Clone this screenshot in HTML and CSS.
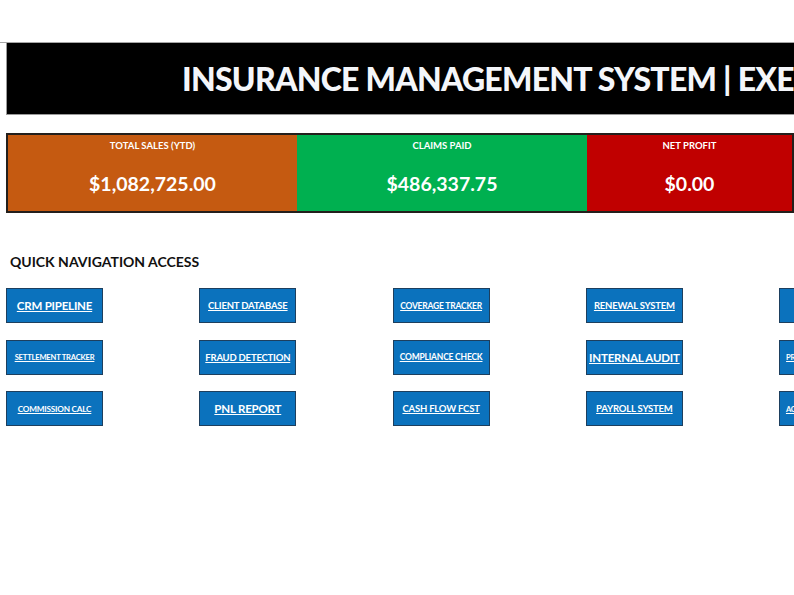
FILE: index.html
```html
<!DOCTYPE html>
<html>
<head>
<meta charset="utf-8">
<link rel="stylesheet" href="styles.css">
</head>
<body>
<div class="page">
  <div class="topline"></div>
  <div class="header">
    <h1 class="title">INSURANCE MANAGEMENT SYSTEM | EXECUTIVE DASHBOARD</h1>
  </div>
  <div class="kpis">
    <div class="kpi kpi-sales">
      <div class="kpi-label">TOTAL SALES (YTD)</div>
      <div class="kpi-value">$1,082,725.00</div>
    </div>
    <div class="kpi kpi-claims">
      <div class="kpi-label">CLAIMS PAID</div>
      <div class="kpi-value">$486,337.75</div>
    </div>
    <div class="kpi kpi-profit">
      <div class="kpi-label">NET PROFIT</div>
      <div class="kpi-value">$0.00</div>
    </div>
  </div>
  <h2 class="section">QUICK NAVIGATION ACCESS</h2>
  <div class="nav">
    <a class="btn fs12">CRM PIPELINE</a>
    <a class="btn fs10">CLIENT DATABASE</a>
    <a class="btn fs9">COVERAGE TRACKER</a>
    <a class="btn fs10">RENEWAL SYSTEM</a>
    <a class="btn fs10">POLICY ADMIN</a>
    <a class="btn fs8">SETTLEMENT TRACKER</a>
    <a class="btn fs10">FRAUD DETECTION</a>
    <a class="btn fs9">COMPLIANCE CHECK</a>
    <a class="btn fs12">INTERNAL AUDIT</a>
    <a class="btn fs8">PREMIUM CALCULATOR</a>
    <a class="btn fs8b">COMMISSION CALC</a>
    <a class="btn fs12">PNL REPORT</a>
    <a class="btn fs10">CASH FLOW FCST</a>
    <a class="btn fs10">PAYROLL SYSTEM</a>
    <a class="btn fs8">ACCOUNTS RECEIVABLE</a>
  </div>
</div>
</body>
</html>
```
FILE: styles.css
```css
html, body {
  margin: 0;
  padding: 0;
  background: #ffffff;
  overflow: hidden;
  width: 794px;
  height: 595px;
}
body {
  font-family: "Lato", "Open Sans", "Liberation Sans", sans-serif;
}
.page {
  padding-top: 42px;
  width: 794px;
  overflow: hidden;
}
.topline {
  height: 1px;
  background: #a6a6a6;
}
.header {
  margin-left: 6px;
  height: 71px;
  background: #000000;
  border-left: 1px solid #9a9a9a;
  border-bottom: 1px solid #9a9a9a;
  display: flex;
  align-items: center;
  white-space: nowrap;
  overflow: hidden;
}
.title {
  margin: 0 0 0 175px;
  color: #f4f6fa;
  font-size: 32px;
  font-weight: 900;
  letter-spacing: -0.75px;
  line-height: 1;
}
.kpis {
  margin: 18px 0 0 6px;
  width: 784px;
  height: 76px;
  border: 2px solid #231f1c;
  display: flex;
}
.kpi {
  display: flex;
  flex-direction: column;
  align-items: center;
  color: #ffffff;
  font-weight: 700;
}
.kpi-sales { width: 289px; background: #c55a11; }
.kpi-claims { width: 290px; background: #00b050; }
.kpi-profit { flex: 1; background: #c00000; }
.kpi-label {
  margin-top: 5px;
  font-size: 9.5px;
  line-height: 12px;
}
.kpi-value {
  margin-top: 21px;
  font-size: 19.5px;
  line-height: 22px;
}
.section {
  margin: 40px 0 0 10px;
  font-size: 14px;
  line-height: 18px;
  font-weight: 700;
  color: #111111;
}
.nav {
  margin: 17px 0 0 6px;
  display: grid;
  grid-template-columns: repeat(5, 97px);
  column-gap: 96.3px;
  row-gap: 16.5px;
  width: 900px;
}
.btn {
  height: 33px;
  background: #0b72bd;
  border: 1px solid #1d3f5e;
  color: #ffffff;
  text-decoration: underline;
  font-weight: 700;
  display: flex;
  align-items: center;
  justify-content: center;
  white-space: nowrap;
  overflow: hidden;
  letter-spacing: -0.2px;
}
.fs12 { font-size: 11.5px; }
.fs10 { font-size: 9.5px; }
.fs9 { font-size: 8.5px; }
.fs8 { font-size: 7.6px; }
.fs8b { font-size: 8.2px; }
```
